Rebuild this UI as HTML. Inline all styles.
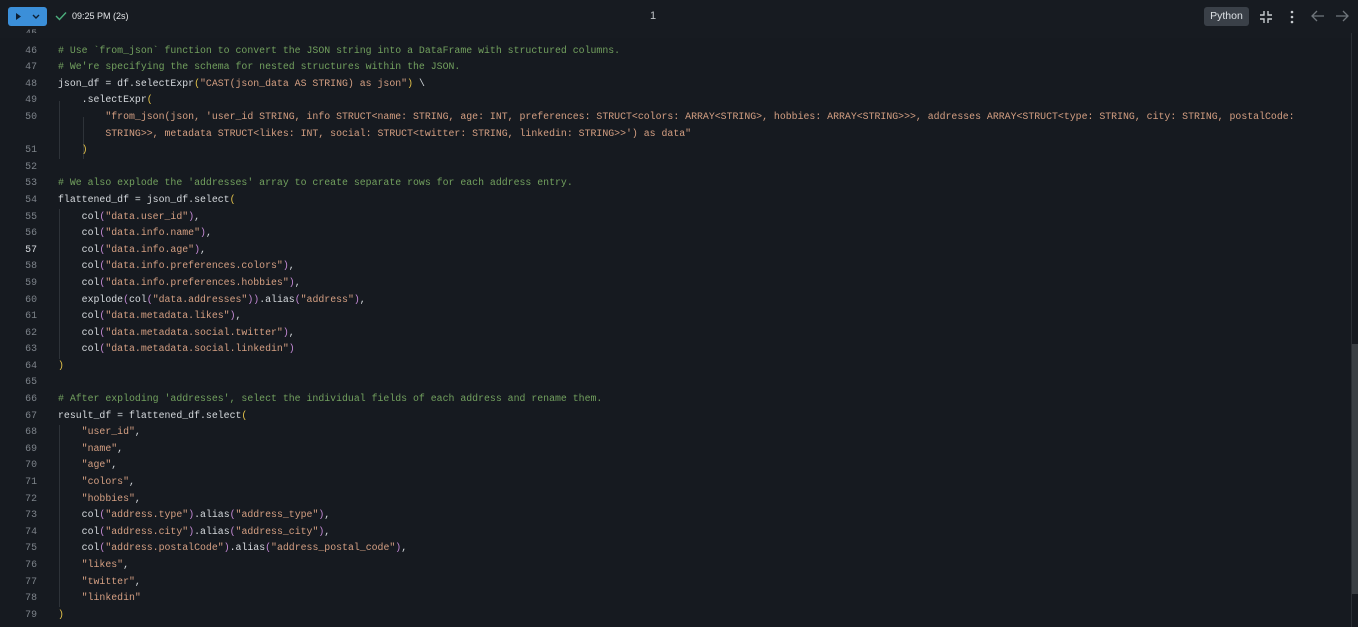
<!DOCTYPE html>
<html><head><meta charset="utf-8"><style>
html,body{margin:0;padding:0;background:#161a20;width:1358px;height:627px;overflow:hidden;font-family:"Liberation Sans",sans-serif}
.top{position:absolute;left:0;top:0;width:1358px;height:33px;background:#171b21}
.run{position:absolute;left:8px;top:7px;width:39px;height:19px;background:#3b8fd9;border-radius:3px}
.code{position:absolute;left:0;top:26px;font-family:"Liberation Mono",monospace;font-size:9.87px;line-height:16.6px;color:#d6dade}
.r{height:16.6px;position:relative}
.n{position:absolute;left:0;width:37px;text-align:right;color:#7d838a}
.t{position:absolute;left:58px;white-space:pre}
.c{color:#72a05e}.s{color:#d49f82}.p{color:#e3c24a}.b{color:#c58ad6}
.g{position:absolute;width:1px;background:#2e3339}
</style></head><body>
<div class="top"></div>
<div class="run"><svg width="39" height="19"><path d="M8 6 L13 9.5 L8 13Z" fill="#0d1f33"/><path d="M25 8 L28 11 L31 8" stroke="#0d1f33" stroke-width="1.4" fill="none"/></svg></div>
<svg style="position:absolute;left:55px;top:11px" width="12" height="10"><path d="M1 5 L4.5 8.5 L11 1.5" stroke="#4caf7d" stroke-width="1.4" fill="none"/></svg>
<div style="position:absolute;left:72px;top:11px;font-size:9px;color:#e6e8ea">09:25 PM (2s)</div>
<div style="position:absolute;left:650px;top:10px;font-size:11px;color:#c0c4c8">1</div>
<div style="position:absolute;left:1204px;top:7px;width:45px;height:19px;background:#3a4048;border-radius:3px;color:#dde1e5;font-size:10.5px;line-height:19px;text-align:center">Python</div>
<svg style="position:absolute;left:1259px;top:10px" width="14" height="14" fill="none" stroke="#c8ccd0" stroke-width="1.4"><path d="M5 1v4H1M9 1v4h4M5 13V9H1M9 13V9h4"/></svg>
<svg style="position:absolute;left:1288px;top:9px" width="8" height="16" fill="#c8ccd0"><circle cx="4" cy="3" r="1.3"/><circle cx="4" cy="8" r="1.3"/><circle cx="4" cy="13" r="1.3"/></svg>
<svg style="position:absolute;left:1311px;top:10px" width="14" height="12" fill="none" stroke="#70767c" stroke-width="1.3"><path d="M13 6H1M6 1L1 6l5 5"/></svg>
<svg style="position:absolute;left:1335px;top:10px" width="14" height="12" fill="none" stroke="#70767c" stroke-width="1.3"><path d="M1 6h12M8 1l5 5-5 5"/></svg>
<div style="position:absolute;left:1351px;top:33px;width:1px;height:594px;background:#2a2f35"></div>
<div style="position:absolute;left:1352px;top:344px;width:6px;height:250px;background:#3a3f44"></div>
<div class="g" style="left:59px;top:101px;height:58px"></div>
<div class="g" style="left:83px;top:117px;height:42px"></div>
<div class="g" style="left:59px;top:209px;height:150px"></div>
<div class="g" style="left:59px;top:425px;height:182px"></div>
<div class="code">
<div class="r"><span class="n">45</span></div>
<div class="r"><span class="n">46</span><span class="t c"># Use `from_json` function to convert the JSON string into a DataFrame with structured columns.</span></div>
<div class="r"><span class="n">47</span><span class="t c"># We're specifying the schema for nested structures within the JSON.</span></div>
<div class="r"><span class="n">48</span><span class="t">json_df = df.selectExpr<span class="p">(</span><span class="s">"CAST(json_data AS STRING) as json"</span><span class="p">)</span> \</span></div>
<div class="r"><span class="n">49</span><span class="t">    .selectExpr<span class="p">(</span></span></div>
<div class="r"><span class="n">50</span><span class="t s">        "from_json(json, 'user_id STRING, info STRUCT&lt;name: STRING, age: INT, preferences: STRUCT&lt;colors: ARRAY&lt;STRING&gt;, hobbies: ARRAY&lt;STRING&gt;&gt;&gt;, addresses ARRAY&lt;STRUCT&lt;type: STRING, city: STRING, postalCode:</span></div>
<div class="r"><span class="t s">        STRING&gt;&gt;, metadata STRUCT&lt;likes: INT, social: STRUCT&lt;twitter: STRING, linkedin: STRING&gt;&gt;') as data"</span></div>
<div class="r"><span class="n">51</span><span class="t">    <span class="p">)</span></span></div>
<div class="r"><span class="n">52</span></div>
<div class="r"><span class="n">53</span><span class="t c"># We also explode the 'addresses' array to create separate rows for each address entry.</span></div>
<div class="r"><span class="n">54</span><span class="t">flattened_df = json_df.select<span class="p">(</span></span></div>
<div class="r"><span class="n">55</span><span class="t">    col<span class="b">(</span><span class="s">"data.user_id"</span><span class="b">)</span>,</span></div>
<div class="r"><span class="n">56</span><span class="t">    col<span class="b">(</span><span class="s">"data.info.name"</span><span class="b">)</span>,</span></div>
<div class="r"><span class="n" style="color:#d8dce0">57</span><span class="t">    col<span class="b">(</span><span class="s">"data.info.age"</span><span class="b">)</span>,</span></div>
<div class="r"><span class="n">58</span><span class="t">    col<span class="b">(</span><span class="s">"data.info.preferences.colors"</span><span class="b">)</span>,</span></div>
<div class="r"><span class="n">59</span><span class="t">    col<span class="b">(</span><span class="s">"data.info.preferences.hobbies"</span><span class="b">)</span>,</span></div>
<div class="r"><span class="n">60</span><span class="t">    explode<span class="b">(</span>col<span class="b">(</span><span class="s">"data.addresses"</span><span class="b">))</span>.alias<span class="b">(</span><span class="s">"address"</span><span class="b">)</span>,</span></div>
<div class="r"><span class="n">61</span><span class="t">    col<span class="b">(</span><span class="s">"data.metadata.likes"</span><span class="b">)</span>,</span></div>
<div class="r"><span class="n">62</span><span class="t">    col<span class="b">(</span><span class="s">"data.metadata.social.twitter"</span><span class="b">)</span>,</span></div>
<div class="r"><span class="n">63</span><span class="t">    col<span class="b">(</span><span class="s">"data.metadata.social.linkedin"</span><span class="b">)</span></span></div>
<div class="r"><span class="n">64</span><span class="t p">)</span></div>
<div class="r"><span class="n">65</span></div>
<div class="r"><span class="n">66</span><span class="t c"># After exploding 'addresses', select the individual fields of each address and rename them.</span></div>
<div class="r"><span class="n">67</span><span class="t">result_df = flattened_df.select<span class="p">(</span></span></div>
<div class="r"><span class="n">68</span><span class="t">    <span class="s">"user_id"</span>,</span></div>
<div class="r"><span class="n">69</span><span class="t">    <span class="s">"name"</span>,</span></div>
<div class="r"><span class="n">70</span><span class="t">    <span class="s">"age"</span>,</span></div>
<div class="r"><span class="n">71</span><span class="t">    <span class="s">"colors"</span>,</span></div>
<div class="r"><span class="n">72</span><span class="t">    <span class="s">"hobbies"</span>,</span></div>
<div class="r"><span class="n">73</span><span class="t">    col<span class="b">(</span><span class="s">"address.type"</span><span class="b">)</span>.alias<span class="b">(</span><span class="s">"address_type"</span><span class="b">)</span>,</span></div>
<div class="r"><span class="n">74</span><span class="t">    col<span class="b">(</span><span class="s">"address.city"</span><span class="b">)</span>.alias<span class="b">(</span><span class="s">"address_city"</span><span class="b">)</span>,</span></div>
<div class="r"><span class="n">75</span><span class="t">    col<span class="b">(</span><span class="s">"address.postalCode"</span><span class="b">)</span>.alias<span class="b">(</span><span class="s">"address_postal_code"</span><span class="b">)</span>,</span></div>
<div class="r"><span class="n">76</span><span class="t">    <span class="s">"likes"</span>,</span></div>
<div class="r"><span class="n">77</span><span class="t">    <span class="s">"twitter"</span>,</span></div>
<div class="r"><span class="n">78</span><span class="t">    <span class="s">"linkedin"</span></span></div>
<div class="r"><span class="n">79</span><span class="t p">)</span></div>
</div>
<div style="position:absolute;left:0;top:33px;width:1351px;height:5px;background:#171b21"></div>
</body></html>
